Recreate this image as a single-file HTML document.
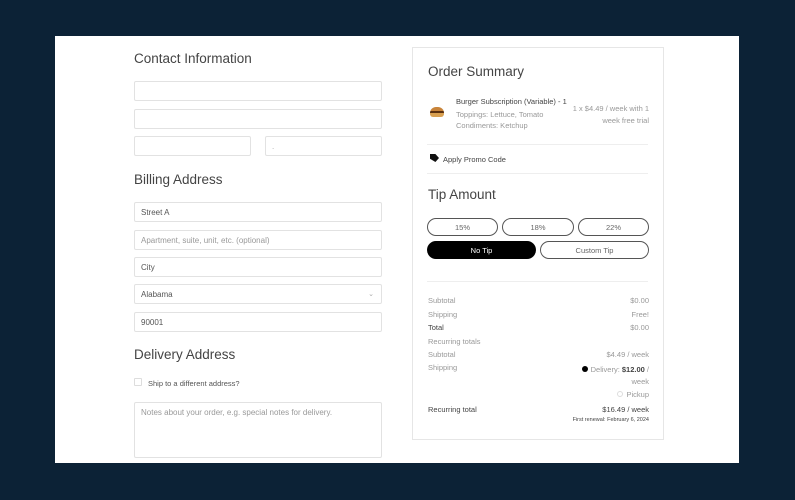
<!DOCTYPE html>
<html><head><meta charset="utf-8"><style>
*{box-sizing:border-box;margin:0;padding:0}
body{width:795px;height:500px;background:#0c2236;font-family:"Liberation Sans",sans-serif;position:relative;overflow:hidden}
.p{position:absolute;left:55px;top:36px;width:684px;height:427px;background:#fff}
.a{position:absolute}
.in{position:absolute;border:1px solid #e2e2e2;border-radius:2px;background:#fff;font-size:8px;color:#555;padding-left:6px;display:flex;align-items:center}
.h{position:absolute;font-size:13.5px;color:#444}
.t{position:absolute;font-size:7.5px;color:#999}
.r{text-align:right}
.btn{position:absolute;border:1px solid #555;border-radius:10px;font-size:7.5px;color:#666;display:flex;align-items:center;justify-content:center;height:18px}
</style></head><body>
<div class="p"></div>
<div class="h" style="left:134px;top:51px">Contact Information</div>
<div class="in" style="left:134px;top:81px;width:248px;height:20px"></div>
<div class="in" style="left:134px;top:109px;width:248px;height:20px"></div>
<div class="in" style="left:134px;top:136px;width:117px;height:20px"></div>
<div class="in" style="left:265px;top:136px;width:117px;height:20px;color:#aaa">.</div>
<div class="h" style="left:134px;top:172px">Billing Address</div>
<div class="in" style="left:134px;top:202px;width:248px;height:20px">Street A</div>
<div class="in" style="left:134px;top:230px;width:248px;height:20px;color:#999">Apartment, suite, unit, etc. (optional)</div>
<div class="in" style="left:134px;top:257px;width:248px;height:20px">City</div>
<div class="in" style="left:134px;top:284px;width:248px;height:20px">Alabama<span style="position:absolute;right:7px;color:#aaa;font-size:7px">⌄</span></div>
<div class="in" style="left:134px;top:312px;width:248px;height:20px">90001</div>
<div class="h" style="left:134px;top:347px">Delivery Address</div>
<div class="a" style="left:134px;top:378px;width:8px;height:8px;border:1px solid #ddd;border-radius:1px"></div>
<div class="t" style="left:148px;top:379px;color:#555">Ship to a different address?</div>
<div class="in" style="left:134px;top:402px;width:248px;height:56px;align-items:flex-start;padding-top:5px;color:#999">Notes about your order, e.g. special notes for delivery.</div>

<div class="a" style="left:412px;top:47px;width:252px;height:393px;border:1px solid #e6e6e6"></div>
<div class="h" style="left:428px;top:64px">Order Summary</div>
<div class="a" style="left:430px;top:107px;width:14px;height:10px;border-radius:6px 6px 3px 3px;background:linear-gradient(#c8843a 0 40%,#5a3010 40% 60%,#d9a050 60%)"></div>
<div class="t" style="left:456px;top:97px;color:#444">Burger Subscription (Variable) - 1</div>
<div class="t" style="left:456px;top:110px">Toppings: Lettuce, Tomato</div>
<div class="t" style="left:456px;top:121px">Condiments: Ketchup</div>
<div class="t r" style="left:565px;top:103px;width:84px;line-height:12px">1 x $4.49 / week with 1 week free trial</div>
<div class="a" style="left:427px;top:144px;width:221px;height:1px;background:#eee"></div>
<div class="a" style="left:430px;top:154px;width:9px;height:8px;background:#111;clip-path:polygon(0 0,60% 0,100% 50%,60% 100%,0 60%)"></div>
<div class="t" style="left:443px;top:155px;color:#444">Apply Promo Code</div>
<div class="a" style="left:427px;top:173px;width:221px;height:1px;background:#eee"></div>
<div class="h" style="left:428px;top:187px">Tip Amount</div>
<div class="btn" style="left:427px;top:218px;width:71px">15%</div>
<div class="btn" style="left:502px;top:218px;width:72px">18%</div>
<div class="btn" style="left:578px;top:218px;width:71px">22%</div>
<div class="btn" style="left:427px;top:241px;width:109px;background:#000;color:#fff;border-color:#000">No Tip</div>
<div class="btn" style="left:540px;top:241px;width:109px">Custom Tip</div>
<div class="a" style="left:427px;top:281px;width:221px;height:1px;background:#eee"></div>
<div class="t" style="left:428px;top:296px">Subtotal</div><div class="t r" style="left:560px;top:296px;width:89px">$0.00</div>
<div class="t" style="left:428px;top:310px">Shipping</div><div class="t r" style="left:560px;top:310px;width:89px">Free!</div>
<div class="t" style="left:428px;top:323px;color:#444">Total</div><div class="t r" style="left:560px;top:323px;width:89px">$0.00</div>
<div class="t" style="left:428px;top:337px">Recurring totals</div>
<div class="t" style="left:428px;top:350px">Subtotal</div><div class="t r" style="left:560px;top:350px;width:89px">$4.49 / week</div>
<div class="t" style="left:428px;top:363px">Shipping</div>
<div class="t r" style="left:574px;top:364px;width:75px;line-height:12px"><span style="display:inline-block;width:6px;height:6px;border-radius:50%;background:#000;margin-right:3px"></span>Delivery: <b style="color:#444">$12.00</b> / week</div>
<div class="t r" style="left:560px;top:390px;width:89px"><span style="display:inline-block;width:6px;height:6px;border-radius:50%;border:1px solid #ddd;margin-right:3px"></span>Pickup</div>
<div class="t" style="left:428px;top:405px;color:#444">Recurring total</div><div class="t r" style="left:560px;top:405px;width:89px;color:#444">$16.49 / week</div>
<div class="t r" style="left:540px;top:417px;width:109px;font-size:5.5px;color:#444">First renewal: February 6, 2024</div>
</body></html>
